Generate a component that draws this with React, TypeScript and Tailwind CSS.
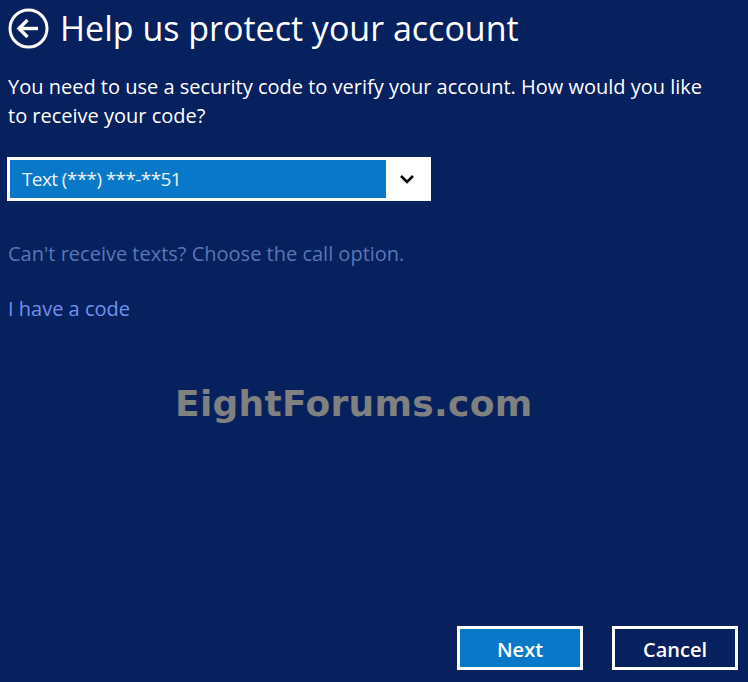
import React from "react";

export default function App() {
  return (
    <div
      className="relative w-[748px] h-[682px] bg-[#07205e] text-white flex flex-col overflow-hidden"
      style={{ fontFamily: '"Open Sans", "Noto Sans", sans-serif' }}
    >
      <div className="flex items-center pl-[8px] pt-[7px] h-[50px]">
        <svg width="41" height="41" viewBox="0 0 41 41" className="shrink-0">
          <circle cx="20.5" cy="20.5" r="18.5" fill="none" stroke="white" strokeWidth="3" />
          <path d="M11 20.5 H30" stroke="white" strokeWidth="3.4" fill="none" />
          <path d="M19.5 12 L11 20.5 L19.5 29" stroke="white" strokeWidth="3.4" fill="none" strokeLinejoin="miter" />
        </svg>
        <h1 className="ml-[11px] text-[34px] leading-none font-normal -mt-[1px]">
          Help us protect your account
        </h1>
      </div>

      <p className="mt-[22px] pl-[8px] pr-[20px] text-[20px] leading-[29px]">
        You need to use a security code to verify your account. How would you like
        <br />
        to receive your code?
      </p>

      <div className="mt-[27px] ml-[7px] w-[424px] h-[44px] bg-white p-[3px] flex">
        <div className="flex-1 bg-[#0a78c8] flex items-center pl-[12px] text-[19px] text-[#e8f2fb] tracking-[-0.6px]">
          Text (***) ***-**51
        </div>
        <div className="w-[42px] flex items-center justify-center">
          <svg width="16" height="10" viewBox="0 0 16 10">
            <path d="M2 2 L8 8 L14 2" stroke="black" strokeWidth="2.6" fill="none" />
          </svg>
        </div>
      </div>

      <p className="mt-[40px] pl-[8px] text-[20px] leading-[26px] text-[#5a77b4]">
        Can't receive texts? Choose the call option.
      </p>

      <p className="mt-[29px] pl-[8px] text-[20px] leading-[26px] text-[#6f92ef]">
        I have a code
      </p>

      <div
        className="absolute left-[175px] top-[386px] text-[36px] font-bold text-[#808080] leading-none tracking-[0.3px]"
        style={{ fontFamily: '"DejaVu Sans", Verdana, sans-serif' }}
      >
        EightForums.com
      </div>

      <div className="mt-auto mb-[12px] flex justify-end gap-[29px] pr-[10px]">
        <button className="w-[126px] h-[44px] pt-[3px] border-[3px] border-white bg-[#0a78c8] text-[20px] font-semibold text-white">
          Next
        </button>
        <button className="w-[126px] h-[44px] pt-[3px] border-[3px] border-white bg-[#07205e] text-[20px] font-semibold text-white">
          Cancel
        </button>
      </div>
    </div>
  );
}
